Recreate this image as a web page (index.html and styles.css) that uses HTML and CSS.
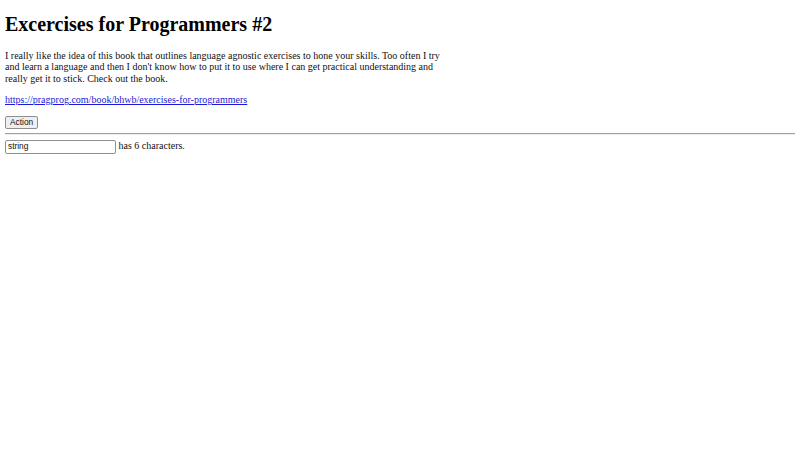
FILE: index.html
```html
<!DOCTYPE html>
<html>
<head>
<meta charset="utf-8">
<title>Excercises for Programmers #2</title>
<link rel="stylesheet" href="styles.css">
</head>
<body class="page">
<h1 class="title">Excercises for Programmers #2</h1>
<p class="intro">I really like the idea of this book that outlines language agnostic exercises to hone your skills. Too often I try and learn a language and then I don't know how to put it to use where I can get practical understanding and really get it to stick. Check out the book.</p>
<p class="intro"><a class="link" href="#">https://pragprog.com/book/bhwb/exercises-for-programmers</a></p>
<div class="actions"><button class="btn" type="button">Action</button></div>
<hr class="rule">
<div class="row"><input class="field" type="text" value="string"> has 6 characters.</div>
</body>
</html>
```
FILE: styles.css
```css
html { background: #fff; }
.page {
  margin: 0 5px 5px;
  font-family: "Liberation Serif", "Times New Roman", serif;
  font-size: 10px;
  line-height: 1.15;
  color: #111;
}
.title {
  font-size: 20px;
  font-weight: bold;
  margin: 13.4px 0;
  line-height: 1.15;
  color: #000;
}
.intro {
  margin: 10px 0;
  max-width: 450px;
}
.link { color: #1a1ad8; text-decoration: underline; }
.actions { display: block; }
.btn {
  font-family: "Liberation Sans", Arial, sans-serif;
  font-size: 8.33px;
  line-height: 1.15;
  padding: 1px 4px;
  margin: 0;
  border: 1px solid #8f8f8f;
  border-radius: 2px;
  background: #efefef;
  color: #111;
}
.rule {
  margin: 4px 0 5px;
  border: 0;
  border-top: 1px solid #a0a0a0;
  border-bottom: 1px solid #eee;
  height: 0;
}
.field {
  font-family: "Liberation Sans", Arial, sans-serif;
  font-size: 8.33px;
  line-height: 1.15;
  width: 111px;
  box-sizing: border-box;
  padding: 1px 2px;
  margin: 0;
  border: 1px solid #8f8f8f;
  border-radius: 2px;
  color: #111;
  vertical-align: middle;
}
.row { line-height: 1.15; }
```
